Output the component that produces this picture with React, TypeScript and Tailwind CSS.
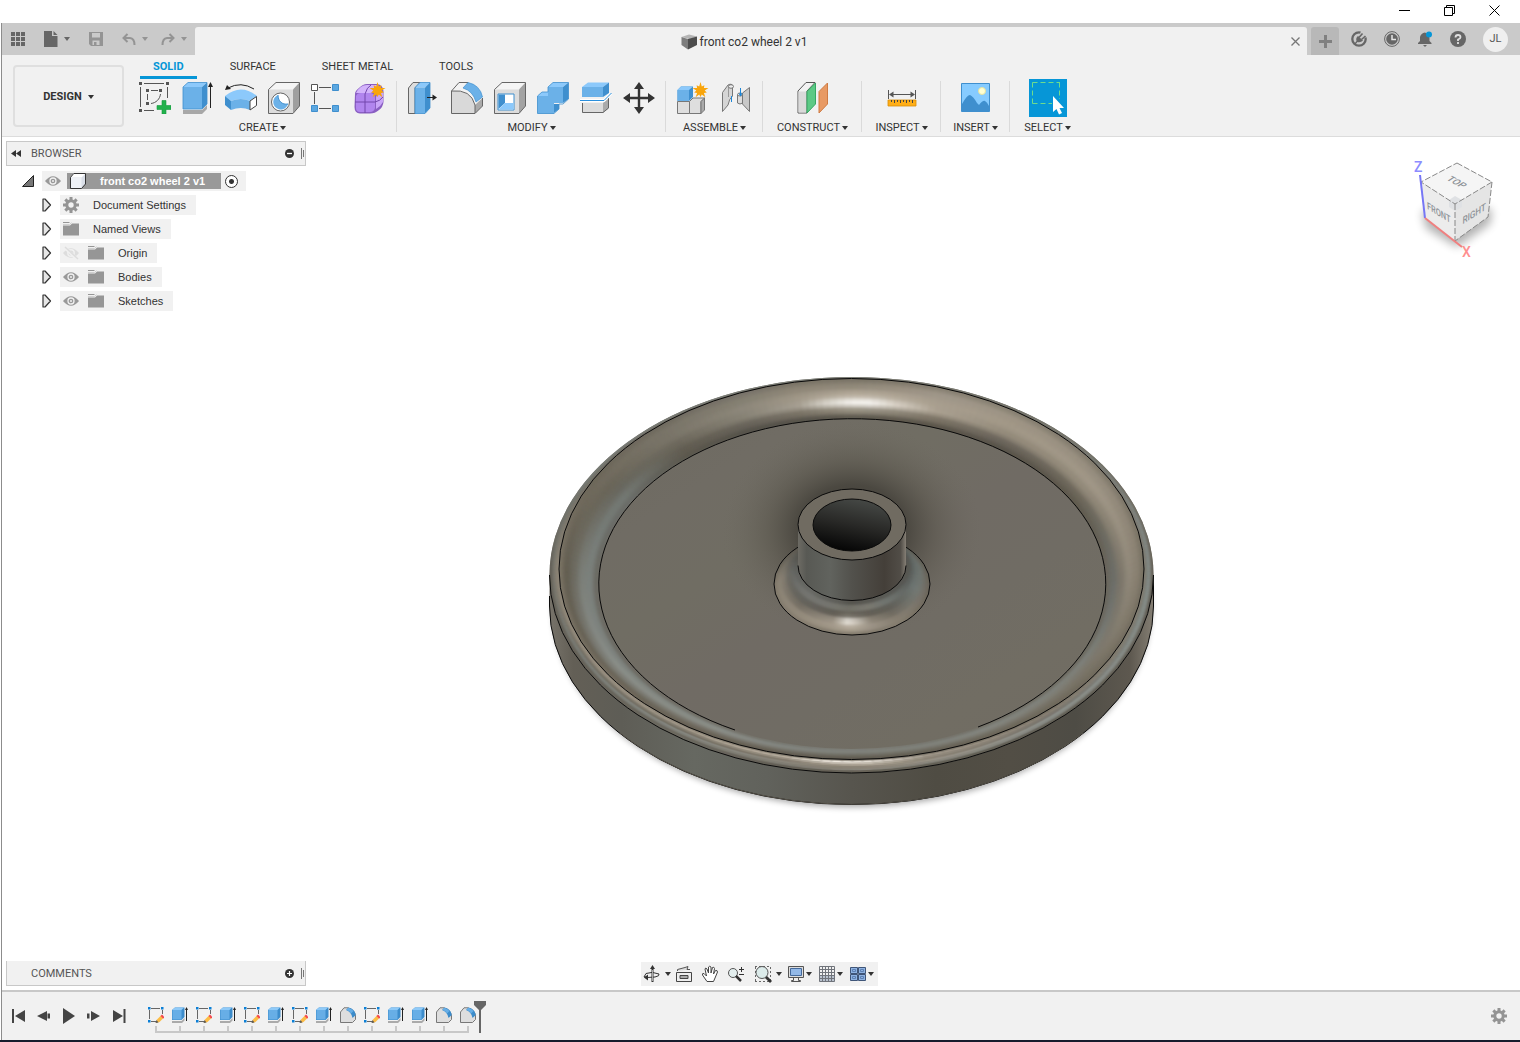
import React from "react";

type P = { children?: React.ReactNode };

const Caret = ({ color = "#333" }: { color?: string }) => (
  <svg width="6" height="4" viewBox="0 0 6 4" className="shrink-0" aria-hidden="true">
    <path d="M0 0H6L3 4Z" fill={color} />
  </svg>
);

const Icon32 = ({ children }: P) => (
  <svg width="32" height="32" viewBox="0 0 32 32" fill="none" className="shrink-0" aria-hidden="true">
    {children}
  </svg>
);

const Star = ({ x, y }: { x: number; y: number }) => {
  const pts: string[] = [];
  for (let i = 0; i < 20; i++) {
    const r = i % 2 ? 4.2 : i % 4 ? 6.6 : 8.4;
    const a = (i * Math.PI) / 10 - Math.PI / 2;
    pts.push(`${(x + r * Math.cos(a)).toFixed(1)},${(y + r * Math.sin(a)).toFixed(1)}`);
  }
  return <polygon points={pts.join(" ")} fill="#f9a50b" />;
};

const L = "#6bb1e8";
const T = "#8cc9fb";
const D = "#3f8fce";

/* ---------- Create ---------- */
const SketchIcon = () => (
  <Icon32>
    <path d="M5 1.500H25M1.500 5V25M28.500 5V16M5 28.500H15M12 8.500H19M8.500 12V18M21.500 12C21 17 17 21 12 21.500" stroke="#555" />
    <path d="M0 0h3v3H0zM27 0h3v3h-3zM0 27h3v3H0zM7 7h3v3H7zM20 7h3v3h-3zM7 20h3v3H7z" fill="#555" />
    <path d="M23 18.500h4v5h5v4h-5v4.500h-4v-4.500h-5v-4h5z" fill="#22b14c" stroke="#159a3e" strokeWidth=".6" />
  </Icon32>
);
const ExtrudeIcon = () => (
  <Icon32>
    <path d="M1 28H20L25 23V27L20 32H1Z" fill="#a8a8a8" />
    <path d="M1 5L6 .5H25L20 5Z" fill={T} />
    <path d="M1 5H20V27H1Z" fill={L} />
    <path d="M20 5L25 .5V22L20 27Z" fill={D} />
    <path d="M1 5L6 .5H25V22L20 27H1Z" stroke="#3f8fce" strokeWidth=".8" />
    <path d="M28.500 3V26" stroke="#222" />
    <path d="M26 5L28.500 0L31 5Z" fill="#222" />
  </Icon32>
);
const RevolveIcon = () => (
  <Icon32>
    <path d="M0 14Q16 1 32 14L25 19Q16 15 6 19Z" fill={T} />
    <path d="M6 19Q16 15 25 19V28Q16 24 6 28Z" fill={L} />
    <path d="M0 14L6 19V28L0 23Z" fill={D} />
    <path d="M25 19L31.500 14.500V23.500L25 28Z" fill="#fff" stroke="#444" />
    <path d="M3 6Q16 -1 29 7" stroke="#222" />
    <path d="M0 8L2 3L6 7Z" fill="#222" />
  </Icon32>
);
const HoleIcon = () => (
  <Icon32>
    <path d="M.5 7.500L8 .5H31.500L25 7.500Z" fill="#f5f5f5" />
    <path d="M.5 7.500H25V31.500H.5Z" fill="#dcdcdc" />
    <path d="M25 7.500L31.500 .5V24L25 31.500Z" fill="#9f9f9f" />
    <path d="M.5 7.500L8 .5H31.500V24L25 31.500H.5Z" stroke="#666" />
    <circle cx="12.500" cy="20" r="9" fill="#fff" stroke="#666" />
    <path d="M10 13A7.500 7.500 0 1 0 20 22C14 23 10 19 10 13Z" fill={L} />
    <path d="M10 13C10 19 14 23 20 22" stroke={D} />
  </Icon32>
);
const PatternIcon = () => (
  <Icon32>
    <path d="M8 5.500H20M3.500 10V22M8 26.500H20" stroke="#555" />
    <path d="M.5 2.500h6v6h-6z" fill="#fff" stroke="#555" />
    <path d="M21.500 2.500h6v6h-6zM.5 23.500h6v6h-6zM21.500 23.500h6v6h-6z" fill="#5ba7e0" stroke="#3f8fce" />
  </Icon32>
);
const FormIcon = () => (
  <Icon32>
    <path d="M1 12Q1 9 5 6Q9 2 13 2H23Q29 3 29.500 9V20Q29 25 25 28Q21 31.500 16 31.500H6Q.5 31 .5 25Z" fill="#8a5fc2" />
    <path d="M2 11Q6 3 13 3H22Q26 3 25 8Q20 11 16 11H6Z" fill="#d3b3fb" />
    <path d="M2 14Q3 11 7 11H17Q21 12 21 16V26Q20 30 16 30H6Q2 30 2 26Z" fill="#b185ee" />
    <path d="M22 15Q23 12 29 10V20Q27 24 22 27Z" fill="#c9a5f8" />
    <path d="M1 20H21Q26 19 29 15M11 31V12Q13 5 17 3" stroke="#7347ac" />
    <Star x={23.5} y={8.5} />
  </Icon32>
);

/* ---------- Modify ---------- */
const PressPullIcon = () => (
  <Icon32>
    <path d="M.5 6L5 .5H12L7 6V31.500H.5Z" fill="#ddd" stroke="#666" />
    <path d="M7 5.500L12 .5H22L17 5.500Z" fill={T} />
    <path d="M7 5.500H17V31.500H7Z" fill={L} />
    <path d="M17 5.500L22 .5V26L17 31.500Z" fill={D} />
    <path d="M7 5.500L12 .5H22V26L17 31.500H7Z" stroke="#3f8fce" strokeWidth=".8" />
    <path d="M19 15.500H26" stroke="#222" />
    <path d="M24.500 12.500L29 15.500L24.500 18.500Z" fill="#222" />
  </Icon32>
);
const FilletIcon = () => (
  <Icon32>
    <path d="M0.500 9L8 .5H17Q30 5 31.500 18V24L24 31.500H.5Z" fill="#f3f3f3" />
    <path d="M.5 9Q20 8 24 23V31.500H.5Z" fill="#d9d9d9" />
    <path d="M24 23L31.500 16V24L24 31.500Z" fill="#aaa" />
    <path d="M.5 9L8 .5H17M31.500 16V24L24 31.500H.5V9Q20 7 24 23V31" stroke="#666" />
    <path d="M12 6L17 .5Q29 3 31.500 15L25 20Q22 9 12 6Z" fill={L} stroke={D} strokeWidth=".7" />
  </Icon32>
);
const ShellIcon = () => (
  <Icon32>
    <path d="M.5 7.500L8 .5H31.500L25 7.500Z" fill="#f5f5f5" />
    <path d="M.5 7.500H25V31.500H.5Z" fill="#dcdcdc" />
    <path d="M25 7.500L31.500 .5V24L25 31.500Z" fill="#a3a3a3" />
    <path d="M.5 7.500L8 .5H31.500V24L25 31.500H.5Z" stroke="#666" />
    <path d="M4 12H20V28H4Z" fill="#fff" stroke={D} />
    <path d="M4.500 12.500H11V21L4.500 27Z" fill={D} />
    <path d="M4.500 27.500L11 21H19.500V27.500Z" fill={T} />
  </Icon32>
);
const CombineIcon = () => (
  <Icon32>
    <path d="M.5 14L5 10H11V5L16 .5H31.500L26 5V11L11 15Z" fill={T} />
    <path d="M.5 14H11V5H26V21H17V31.500H.5Z" fill={L} />
    <path d="M26 5L31.500 .5V17L26 21ZM17 22H22V27L17 31Z" fill={D} />
    <path d="M.5 14L5 10H11V5L16 .5H31.500V17L26 22H22V27L17 31.500H.5Z" stroke={D} strokeWidth=".8" />
  </Icon32>
);
const SplitIcon = () => (
  <Icon32>
    <path d="M2 5L8 .5H29L23 5Z" fill={T} />
    <path d="M2 5H23V15H2Z" fill={L} />
    <path d="M23 5L29 .5V11L23 15Z" fill={D} />
    <path d="M2 21H23V31H2Z" fill="#dcdcdc" />
    <path d="M23 21L29 16V26L23 31Z" fill="#aaa" />
    <path d="M2.500 21V30.500H23L28.500 26V16" stroke="#666" />
    <path d="M0 18.500H24L31 11.500" stroke="#fff" strokeWidth="3" />
    <path d="M0 18.500H24L31.500 11" stroke="#2b8fdc" />
  </Icon32>
);
const MoveIcon = () => (
  <Icon32>
    <path d="M16 4V28M4 16H28" stroke="#333" strokeWidth="2.400" />
    <path d="M16 0L21 7H11ZM16 32L21 25H11ZM0 16L7 11V21ZM32 16L25 11V21Z" fill="#333" />
  </Icon32>
);

/* ---------- Assemble and the rest ---------- */
const ComponentIcon = () => (
  <Icon32>
    <path d="M.5 8L4 4.500H16V15L12 19H.5Z" fill={D} />
    <path d="M.5 8H12V19H.5Z" fill={L} />
    <path d="M.5 8L4 4.500H16L12 8Z" fill={T} />
    <path d="M.5 19.500H12.500V31.500H.5Z" fill="#dedede" stroke="#777" />
    <path d="M12.500 19.500L16 16H28L24 19.500V31.500H12.500Z" fill="#dedede" stroke="#777" />
    <path d="M24 19.500L27.500 16V28L24 31.500Z" fill="#aaa" stroke="#777" />
    <Star x={23.5} y={8.5} />
  </Icon32>
);
const JointIcon = () => (
  <Icon32>
    <path d="M2.500 10.500L8 3Q12 1 12.500 4V14Q9 17 8 23L2.500 29.500Z" fill="#d5d5d5" stroke="#777" />
    <path d="M8.500 5V15" stroke="#999" />
    <ellipse cx="11" cy="4.500" rx="2.500" ry="1.800" fill="#eee" stroke="#777" />
    <path d="M29.500 5.500L22.500 11V22L29.500 29.500Z" fill="#c8c8c8" stroke="#777" />
    <path d="M17.500 13V21Q20 23 22.500 21V13Z" fill="#ddd" stroke="#777" />
    <ellipse cx="20" cy="12.500" rx="2.500" ry="1.500" fill="#eee" stroke="#777" />
    <path d="M11.500 14V20M20.500 6V14" stroke="#1c86d8" />
    <path d="M18.500 11.500L20.500 14.500L22.500 11.500Z" fill="#1c86d8" />
  </Icon32>
);
const ConstructIcon = () => (
  <Icon32>
    <path d="M1 9L9 .5H18L10 9V31H1Z" fill="#f2f2f2" stroke="#555" />
    <path d="M1.500 9.500H9V30.500H1.500Z" fill="#dadada" />
    <path d="M10 9.500L18.500 1V22L10 31Z" fill="#5cc985" stroke="#35a862" />
    <path d="M22 9.500L30.500 1V22L22 31Z" fill="#e89a64" stroke="#cf7b43" />
  </Icon32>
);
const InspectIcon = () => (
  <Icon32>
    <path d="M2.500 8V17M29.500 8V17M5 12.500H27" stroke="#555" />
    <path d="M3 12.500L7.500 9.500V15.500ZM29 12.500L24.500 9.500V15.500Z" fill="#555" />
    <path d="M2 18H30V24H2Z" fill="#ffae17" stroke="#d98e05" strokeWidth=".8" />
    <path d="M5.500 18V20M8.500 18V21M11.500 18V20M14.500 18V21M17.500 18V20M20.500 18V21M23.500 18V20M26.500 18V21" stroke="#444" />
  </Icon32>
);
const InsertIcon = () => (
  <Icon32>
    <path d="M1.500 1.500H29.500V29.500H1.500Z" fill="#86cbff" />
    <path d="M2 22Q7 13 10 13Q13 14 17 21L19 23Q23 18 25 19Q27 20 29 24V29.500H2Z" fill="#3f8fce" />
    <path d="M1.500 1.500H29.500V29.500H1.500Z" stroke="#3f8fce" />
    <circle cx="22" cy="9" r="3.500" fill="#ffffd2" stroke="#e6e3a0" />
  </Icon32>
);
const SelectIcon = () => (
  <svg width="38" height="38" viewBox="0 0 38 38" aria-hidden="true">
    <path d="M0 0H38V38H0Z" fill="#0696d7" />
    <path d="M3.500 3.500H31M30.500 3.500V20M3.500 3.500V24.500M3.500 24.500H23" stroke="#6fdc8c" strokeDasharray="5 3" fill="none" />
    <path d="M24 17V33L27.500 30L30 35.500L33 34L30.500 29H35Z" fill="#fff" />
  </svg>
);

type Group = { label: string; width: string; icons: [string, React.ReactNode][] };
const groups: Group[] = [
  {
    label: "CREATE",
    width: "w-[269px]",
    icons: [
      ["Create Sketch", <SketchIcon />],
      ["Extrude", <ExtrudeIcon />],
      ["Revolve", <RevolveIcon />],
      ["Hole", <HoleIcon />],
      ["Rectangular Pattern", <PatternIcon />],
      ["Create Form", <FormIcon />],
    ],
  },
  {
    label: "MODIFY",
    width: "w-[269px]",
    icons: [
      ["Press Pull", <PressPullIcon />],
      ["Fillet", <FilletIcon />],
      ["Shell", <ShellIcon />],
      ["Combine", <CombineIcon />],
      ["Split Body", <SplitIcon />],
      ["Move", <MoveIcon />],
    ],
  },
  { label: "ASSEMBLE", width: "w-[97px]", icons: [["New Component", <ComponentIcon />], ["Joint", <JointIcon />]] },
  { label: "CONSTRUCT", width: "w-[99px]", icons: [["Offset Plane", <ConstructIcon />]] },
  { label: "INSPECT", width: "w-[79px]", icons: [["Measure", <InspectIcon />]] },
  { label: "INSERT", width: "w-[69px]", icons: [["Insert Decal", <InsertIcon />]] },
  { label: "SELECT", width: "w-[75px]", icons: [["Select", <SelectIcon />]] },
];

/* ---------- Small icons ---------- */
const gearTeeth = [0, 45, 90, 135, 180, 225, 270, 315];
const Gear = () => (
  <svg width="16" height="16" viewBox="0 0 16 16" className="shrink-0" aria-hidden="true">
    <circle cx="8" cy="8" r="4.200" fill="none" stroke="#949494" strokeWidth="3" />
    {gearTeeth.map((a) => (
      <rect key={a} x="6.500" y="0" width="3" height="3.500" fill="#949494" transform={`rotate(${a} 8 8)`} />
    ))}
  </svg>
);
const Eye = () => (
  <svg width="16" height="16" viewBox="0 0 16 16" className="shrink-0" aria-hidden="true">
    <path d="M0 8Q8 -1.500 16 8Q8 17.500 0 8Z" fill="#999" />
    <circle cx="8" cy="8" r="3" fill="#999" stroke="#f1f1f1" strokeWidth="1.300" />
    <circle cx="8" cy="8" r="1" fill="#f1f1f1" />
  </svg>
);
const EyeOff = () => (
  <svg width="16" height="16" viewBox="0 0 16 16" className="shrink-0" aria-hidden="true">
    <path d="M0 8Q8 -1.500 16 8Q8 17.500 0 8Z" fill="#ddd" />
    <circle cx="8" cy="8" r="3.200" fill="#ddd" stroke="#f1f1f1" strokeWidth="1.400" />
    <path d="M1 2L14 14" stroke="#f1f1f1" strokeWidth="3" />
    <path d="M2 2L15 14" stroke="#ddd" strokeWidth="1.500" />
  </svg>
);
const Folder = () => (
  <svg width="16" height="14" viewBox="0 0 16 14" className="shrink-0" aria-hidden="true">
    <path d="M0 3.500H7L9 1.500H16V13.500H0Z" fill="#969696" />
    <path d="M0 .5H6.500" stroke="#969696" />
    <path d="M0 2.500H6.500L8.500 .5" stroke="#d0d0d0" fill="none" />
  </svg>
);
const Disclosure = () => (
  <svg width="10" height="14" viewBox="0 0 10 14" aria-hidden="true">
    <path d="M1 1H3L8.500 7L3 13H1Z" fill="#e6e6e6" stroke="#333" strokeWidth="1.200" strokeLinejoin="round" />
  </svg>
);

const Grip = () => (
  <svg width="3" height="11" viewBox="0 0 3 11" aria-hidden="true">
    <path d="M.5 0V11M2.500 2V9" stroke="#777" />
  </svg>
);

const TreeItem = ({ label, icons }: { label: string; icons: React.ReactNode }) => (
  <li className="flex h-5 items-center">
    <button aria-label={`Expand ${label}`} className="mr-2 w-[10px]">
      <Disclosure />
    </button>
    <div className="flex h-5 items-center gap-3.5 bg-[#f1f1f1] pr-2.5 pl-[3px]">
      <span className="flex items-center gap-[9px]">{icons}</span>
      <span>{label}</span>
    </div>
  </li>
);

/* ---------- Model ---------- */
type Ell = { cx: number; cy: number; rx: number; ry: number };
type Key = [number, string[]];
const rgb = (h: string) => [1, 3, 5].map((i) => parseInt(h.slice(i, i + 2), 16));
const mix = (a: number[], b: number[], t: number) => a.map((v, i) => v + (b[i] - v) * t);

const sample = (keys: Key[], ang: number, t: number) => {
  const n = keys.length;
  let i = n - 1;
  for (let k = 0; k < n; k++) if (keys[k][0] <= ang) i = k;
  const a0 = keys[i][0];
  const a1 = i === n - 1 ? keys[0][0] + 360 : keys[i + 1][0];
  const f = (ang - a0) / (a1 - a0);
  const at = (c: string[]) => {
    const p = t * (c.length - 1);
    const j = Math.min(Math.floor(p), c.length - 2);
    const q = p - j;
    return mix(rgb(c[j]), rgb(c[j + 1]), q * q * (3 - 2 * q));
  };
  return mix(at(keys[i][1]), at(keys[(i + 1) % n][1]), f).map(Math.round);
};

const Ring = ({ a, b, keys, rows, steps }: { a: Ell; b: Ell; keys: Key[]; rows: number; steps: number }) => {
  const pt = (deg: number, t: number) => {
    const r = (deg * Math.PI) / 180;
    const m = (u: number, v: number) => u + (v - u) * t;
    return `${(m(a.cx, b.cx) + m(a.rx, b.rx) * Math.sin(r)).toFixed(1)} ${(m(a.cy, b.cy) - m(a.ry, b.ry) * Math.cos(r)).toFixed(1)}`;
  };
  const out: React.ReactNode[] = [];
  for (let i = 0; i < steps; i++)
    for (let j = 0; j < rows; j++) {
      const d0 = (i * 360) / steps;
      const d1 = ((i + 1) * 360) / steps;
      const t0 = j / rows;
      const t1 = (j + 1) / rows;
      const c = `rgb(${sample(keys, (d0 + d1) / 2, (t0 + t1) / 2).join(",")})`;
      out.push(
        <path
          key={`${i}-${j}`}
          d={`M${pt(d0, t0)}L${pt(d1, t0)}L${pt(d1, t1)}L${pt(d0, t1)}Z`}
          fill={c}
          stroke={c}
          strokeWidth={j === 0 || j === rows - 1 ? 2 : 0.6}
        />
      );
    }
  return <g>{out}</g>;
};

const outer: Ell = { cx: 851.5, cy: 575, rx: 302, ry: 198 };
const lip: Ell = { cx: 851.5, cy: 569, rx: 292.5, ry: 190.5 };
const floor: Ell = { cx: 851.5, cy: 584, rx: 253.5, ry: 165 };
const foot: Ell = { cx: 852, cy: 584, rx: 78, ry: 51 };
const neck: Ell = { cx: 852, cy: 565.5, rx: 54, ry: 35 };

const bowlKeys: Key[] = [
  [0, ["#777164", "#908879", "#b5ab9b", "#f6f4ef", "#948d7e", "#5c584e"]],
  [4, ["#777164", "#948c7d", "#b6ac9c", "#f8f6f2", "#918a7c", "#5b574d"]],
  [9, ["#7b7568", "#998f80", "#b1a797", "#dcd5ca", "#8b8475", "#5a554b"]],
  [18, ["#847d6f", "#a0978a", "#a89e8e", "#aca292", "#7a7264", "#59544a"]],
  [35, ["#857e70", "#9f9585", "#a39988", "#938a7a", "#69635a", "#58534a"]],
  [60, ["#7f786a", "#978e7f", "#a29888", "#928979", "#6c6659", "#5f5a4e"]],
  [90, ["#756f61", "#8a8172", "#91897a", "#7c766a", "#6b6d68", "#6b665c"]],
  [120, ["#6f695c", "#777163", "#7b7568", "#7d7a70", "#7f827c", "#6b675d"]],
  [150, ["#6b6558", "#6e695c", "#77746a", "#85867f", "#82857f", "#706c62"]],
  [180, ["#59544a", "#615c52", "#6d6a60", "#787870", "#858984", "#7b7c76"]],
  [210, ["#625c50", "#6c665a", "#777369", "#8b8e88", "#8a8e89", "#6f6c63"]],
  [240, ["#776f62", "#6a6457", "#7e7f78", "#8c908b", "#7e837e", "#6b6860"]],
  [270, ["#7d7667", "#625d50", "#6d6b61", "#7c807a", "#7c827e", "#6a6860"]],
  [300, ["#6c6659", "#716b5e", "#6a6558", "#68675e", "#737873", "#6a6c68"]],
  [320, ["#6f6a5f", "#7a7569", "#7a7569", "#6c675b", "#605b50", "#5b584e"]],
  [338, ["#77716a", "#858072", "#8f897c", "#8a8578", "#68635a", "#55514a"]],
  [349, ["#777164", "#8f8778", "#a19888", "#a8a194", "#787164", "#55514a"]],
  [355, ["#777164", "#8f8778", "#ada393", "#dbd7ce", "#888172", "#58544b"]],
];
const lipKeys: Key[] = [
  [0, ["#6b675c", "#6b675c", "#6b675c", "#77756c", "#7f8079", "#7f8079"]],
  [70, ["#77736a", "#7f7d75", "#7c817d", "#848a86", "#77756c", "#6b675c"]],
  [100, ["#857f72", "#7d7a70", "#7f8783", "#8a928e", "#706d64", "#5b574e"]],
  [140, ["#6e685c", "#8b8376", "#77726a", "#8f938e", "#7c7c75", "#5c584e"]],
  [165, ["#6f695d", "#a0978a", "#8a8274", "#989287", "#7b7970", "#5c584e"]],
  [177, ["#6f695d", "#e3ddd3", "#b0a798", "#8a8274", "#8c897f", "#5c584e"]],
  [184, ["#6f695d", "#efe9e0", "#a39a8b", "#8a8274", "#858177", "#5c584e"]],
  [193, ["#756f62", "#b8ae9f", "#827a6d", "#8a867b", "#75726a", "#5c584e"]],
  [215, ["#857d70", "#a39a8b", "#716b5f", "#898b85", "#6a665c", "#6d6a61"]],
  [245, ["#918878", "#978e80", "#6f6a5f", "#7e837e", "#625e54", "#67635a"]],
  [270, ["#8b8375", "#8c8476", "#857e71", "#77766d", "#6c6960", "#5f5b52"]],
  [300, ["#77736a", "#77736a", "#6e6b62", "#767870", "#7b7f7a", "#777a75"]],
];
const footKeys: Key[] = [
  [0, ["#4d4a43", "#4d4a43", "#4d4a43", "#4d4a43", "#4d4a43", "#4d4a43"]],
  [75, ["#625e54", "#6a6960", "#6d736f", "#666d6a", "#585b58", "#55544f"]],
  [110, ["#6d675a", "#77726a", "#747974", "#6e7673", "#5d615e", "#55544f"]],
  [145, ["#857d6f", "#8a8274", "#6f6a60", "#5f5d56", "#747975", "#555550"]],
  [165, ["#7d7668", "#a0978a", "#8f8779", "#5d5951", "#807f77", "#53524c"]],
  [178, ["#7d7668", "#b0a696", "#d6d0c6", "#635f56", "#7a7971", "#504f4a"]],
  [184, ["#7d7668", "#b0a696", "#ece8e0", "#69655b", "#74736b", "#504f4a"]],
  [196, ["#7d7668", "#a69c8c", "#9d9486", "#5c5850", "#7b7b74", "#5a5a55"]],
  [230, ["#847c6e", "#958c7d", "#746e63", "#62615b", "#787975", "#666763"]],
  [270, ["#7d7668", "#8c8476", "#857e72", "#6d6b64", "#656763", "#5f605c"]],
  [300, ["#5f5b52", "#6a655b", "#66635a", "#5c5a54", "#555550", "#4d4a43"]],
];

const Wheel = () => (
  <svg
    viewBox="540 370 624 450"
    className="absolute top-[233px] left-[calc(50%-221px)] h-[450px] w-[624px]"
    role="img"
    aria-label="front co2 wheel 2 v1 model"
  >
    <defs>
      <linearGradient id="wall" gradientUnits="userSpaceOnUse" x1="549" y1="0" x2="1154" y2="0">
        <stop offset="0" stopColor="#77736a" />
        <stop offset=".04" stopColor="#635f56" />
        <stop offset=".12" stopColor="#5e5d56" />
        <stop offset=".24" stopColor="#666861" />
        <stop offset=".36" stopColor="#61625c" />
        <stop offset=".5" stopColor="#57554e" />
        <stop offset=".64" stopColor="#4f4c43" />
        <stop offset=".76" stopColor="#524e45" />
        <stop offset=".87" stopColor="#4e4c45" />
        <stop offset=".96" stopColor="#5d584f" />
        <stop offset="1" stopColor="#857f74" />
      </linearGradient>
      <linearGradient id="flat" x1="0" y1="0" x2="1" y2="1">
        <stop offset="0" stopColor="#6d6a60" />
        <stop offset=".2" stopColor="#706c64" />
        <stop offset=".35" stopColor="#706d63" />
        <stop offset=".5" stopColor="#706b64" />
        <stop offset=".65" stopColor="#706c64" />
        <stop offset=".8" stopColor="#716d63" />
        <stop offset="1" stopColor="#706b63" />
      </linearGradient>
      <radialGradient id="shade" gradientUnits="userSpaceOnUse" cx="852" cy="530" r="130" gradientTransform="translate(0 90) scale(1 .83)">
        <stop offset="0" stopColor="#37342e" />
        <stop offset=".42" stopColor="#45423b" stopOpacity=".85" />
        <stop offset=".65" stopColor="#57534a" stopOpacity=".5" />
        <stop offset="1" stopColor="#6d6960" stopOpacity="0" />
      </radialGradient>
      <linearGradient id="boss" x1="0" y1="0" x2="1" y2="0">
        <stop offset="0" stopColor="#6d6b64" />
        <stop offset=".08" stopColor="#585954" />
        <stop offset=".3" stopColor="#61635e" />
        <stop offset=".5" stopColor="#52514c" />
        <stop offset=".8" stopColor="#443f39" />
        <stop offset=".95" stopColor="#514d47" />
        <stop offset="1" stopColor="#857f75" />
      </linearGradient>
      <linearGradient id="bore" x1=".7" y1="0" x2=".4" y2="1">
        <stop offset="0" stopColor="#474a47" />
        <stop offset=".5" stopColor="#292927" />
        <stop offset="1" stopColor="#050505" />
      </linearGradient>
      <filter id="soft" x="-5%" y="-5%" width="110%" height="110%">
        <feGaussianBlur stdDeviation="1.6 1.1" />
      </filter>
      <filter id="fine" x="-5%" y="-5%" width="110%" height="110%">
        <feGaussianBlur stdDeviation="1 .5" />
      </filter>
      <filter id="cast" x="-10%" y="-10%" width="120%" height="120%">
        <feGaussianBlur stdDeviation="3" />
      </filter>
      <clipPath id="cOuter"><ellipse {...outer} /></clipPath>
      <clipPath id="cLip"><ellipse {...lip} /></clipPath>
      <clipPath id="cFoot"><ellipse {...foot} /></clipPath>
    </defs>
    <ellipse cx="852" cy="609" rx="299" ry="198" fill="#000" opacity=".35" filter="url(#cast)" />
    <path d="M549.500 575V606A302 198.500 0 0 0 1153.500 606V575Z" fill="url(#wall)" />
    <path d="M549.500 596V606A302 198.500 0 0 0 1153.500 606V575" fill="none" stroke="#0a0a0a" />
    <path d="M620 733A302 199 0 0 0 1083 733" fill="none" stroke="#57534a" />
    <ellipse {...outer} fill="#77756c" />
    <g clipPath="url(#cOuter)">
      <g filter="url(#fine)">
        <Ring a={lip} b={outer} keys={lipKeys} rows={8} steps={180} />
      </g>
    </g>
    <path d="M549.500 575A302 198 0 0 0 1153.500 575" fill="none" stroke="#0a0a0a" />
    <g clipPath="url(#cLip)">
      <g filter="url(#soft)">
        <Ring a={lip} b={floor} keys={bowlKeys} rows={14} steps={240} />
      </g>
    </g>
    <ellipse {...lip} fill="none" stroke="#0a0a0a" />
    <ellipse {...floor} fill="url(#flat)" />
    <ellipse {...floor} fill="url(#shade)" />
    <path d="M735 730A253.500 165 0 1 1 978 727" fill="none" stroke="#0a0a0a" />
    <g clipPath="url(#cFoot)">
      <g filter="url(#soft)">
        <Ring a={foot} b={neck} keys={footKeys} rows={10} steps={120} />
      </g>
    </g>
    <ellipse {...foot} fill="none" stroke="#0a0a0a" />
    <path d="M798 524.500V565.500A54 35 0 0 0 906 565.500V524.500Z" fill="url(#boss)" />
    <path d="M798 565.500A54 35 0 0 0 906 565.500" fill="none" stroke="#0a0a0a" />
    <ellipse cx="852" cy="524.500" rx="54" ry="35.500" fill="#706b61" stroke="#0a0a0a" />
    <ellipse cx="852" cy="525" rx="39" ry="26" fill="url(#bore)" stroke="#0a0a0a" />
  </svg>
);

const ViewCube = () => (
  <svg width="120" height="120" viewBox="0 0 120 120" className="mt-[13px]" role="img" aria-label="View cube">
    <defs>
      <filter id="cubeShadow" x="-30%" y="-30%" width="160%" height="160%">
        <feGaussianBlur stdDeviation="5" />
      </filter>
    </defs>
    <path d="M22 62L55 50L92 60L90 74L57 97L26 78Z" fill="#000" opacity=".3" filter="url(#cubeShadow)" />
    <path d="M57 13L92 32L55 54L21 32Z" fill="#f5f5f5" />
    <path d="M21 32L55 54V91L25 68Z" fill="#ececec" />
    <path d="M55 54L92 32L88 67L55 91Z" fill="#e5e5e5" />
    <path d="M49 50L55 46L62 50V57L55 61L49 57Z" fill="#dfe1e4" />
    <path d="M57 13L92 32L55 54L21 32ZM55 54V91M92 32L88 67L55 91" fill="none" stroke="#888" strokeDasharray="6 2" />
    <path d="M20 25L25 68" stroke="#7676f5" strokeWidth="2" />
    <path d="M25 68L62 97" stroke="#f08080" strokeWidth="2" />
    <g fill="#8d9297" fontFamily="Roboto, sans-serif" fontSize="11" fontWeight="500" textAnchor="middle">
      <text transform="matrix(.78 .42 -.75 .5 54 34)">TOP</text>
      <text transform="matrix(.74 .46 .06 1 39 66)" fontSize="10">FRONT</text>
      <text transform="matrix(.8 -.5 -.03 1 74 67)" fontSize="10">RIGHT</text>
    </g>
    <g fontFamily="Roboto, sans-serif" fontSize="14" fontWeight="500">
      <text x="14" y="22" fill="#8c8cff">Z</text>
      <text x="62" y="107" fill="#ff8f8f">X</text>
    </g>
  </svg>
);

/* ---------- Navigation bar ---------- */
const Nav = ({ label, children, caret, layout }: { label: string; children: React.ReactNode; caret?: boolean; layout: string }) => (
  <button aria-label={label} className={`flex h-6 shrink-0 items-center ${layout}`}>
    <svg width="18" height="18" viewBox="0 0 18 18" fill="none" className="shrink-0" aria-hidden="true">
      {children}
    </svg>
    {caret && <Caret />}
  </button>
);

const NavBar = () => (
  <div className="flex h-6 bg-[#f1f1f1] pl-0.5">
    <Nav label="Orbit" caret layout="w-8 gap-1">
      <path d="M9.500 17V3M3 12H1L3 8.500Q9 6 16 9Q17 11 12 12L4 12.500" stroke="#333" />
      <path d="M7 4L9.500 0L12 4ZM1 12.500L5 9.500V15.500ZM8.500 4H10.500V17H8.500Z" fill="#333" />
      <path d="M9.500 5V16" stroke="#ddd" strokeWidth=".7" />
    </Nav>
    <Nav label="Look At" layout="w-[26px]">
      <path d="M1.500 7.500H16.500V16.500H1.500Z" fill="#eee" stroke="#444" />
      <path d="M5 10.500H13V13.500H5Z" fill="#aaa" stroke="#444" />
      <path d="M2.500 6V4.500L10 2.500L13 1.500L12 4.500H15" fill="#ddd" stroke="#555" />
    </Nav>
    <Nav label="Pan" layout="w-[26px]">
      <path d="M6 16.500L1.500 10Q1 8 3 8.500L5.500 11L4 4Q4.500 2 6 4L7.500 8L7.500 2Q8.500 .5 10 2V8L11.500 2.500Q13 1.500 13.500 3.500L12.500 9L14.500 5.500Q16.500 5 16.500 7L14 13L12.500 16.500H7Z" fill="#fff" stroke="#444" />
    </Nav>
    <Nav label="Zoom" layout="w-[26px]">
      <circle cx="6" cy="8" r="4.500" fill="#e3eeee" stroke="#555" />
      <path d="M9 11L14 16" stroke="#333" strokeWidth="2.500" />
      <path d="M12 4.500H17M14.500 2V7M12 9.500H17" stroke="#333" />
    </Nav>
    <Nav label="Fit" caret layout="w-[34px] gap-1 pl-px">
      <path d="M1 1.500H17M1 16.500H17M1.500 2V17M16.500 2V17" stroke="#666" strokeDasharray="2 2" />
      <circle cx="8" cy="7.500" r="6" fill="#dcebea" stroke="#555" />
      <path d="M12 12L17 17" stroke="#333" strokeWidth="2.800" />
    </Nav>
    <Nav label="Display Settings" caret layout="w-[31px] gap-px">
      <path d="M1.500 1.500H16.500V12.500H1.500Z" fill="#ddd" stroke="#555" />
      <path d="M3.500 3.500H14.500V10.500H3.500Z" fill="#93b9e8" stroke="#456a9c" />
      <path d="M6.500 13V15.500H4.500V16.500H13.500V15.500H11.500V13" fill="#eee" stroke="#555" />
    </Nav>
    <Nav label="Grid and Snaps" caret layout="w-[31px] gap-px">
      <path d="M1.500 11H16.500V17H1.500Z" fill="#b9c2cf" />
      <path d="M1.500 1.500H16.500V16.500H1.500ZM4.500 1V17M7.500 1V17M10.500 1V17M13.500 1V17M1 4.500H17M1 7.500H17M1 10.500H17M1 13.500H17" stroke="#70747b" />
    </Nav>
    <Nav label="Viewports" caret layout="w-[29px] gap-px">
      <path d="M1.500 2.500H8.500V8.500H1.500ZM9.500 2.500H16.500V8.500H9.500ZM1.500 9.500H8.500V15.500H1.500ZM9.500 9.500H16.500V15.500H9.500Z" fill="#8fb3e3" stroke="#3f5578" />
      <path d="M3.500 4.500H6.500V6.500H3.500ZM11.500 4.500H14.500V6.500H11.500ZM3.500 11.500H6.500V13.500H3.500ZM11.500 11.500H14.500V13.500H11.500Z" stroke="#5d80b3" />
    </Nav>
  </div>
);

/* ---------- Timeline ---------- */
const Feature = ({ kind }: { kind: string }) => (
  <svg width="16" height="16" viewBox="0 0 16 16" fill="none" aria-hidden="true">
    {kind === "S" && (
      <>
        <path d="M3 1.500H12M1.500 3V12M14.500 3V7M3 14.500H8" stroke="#666" />
        <path d="M0 0h2.500v2.500H0zM13 0h2.500v2.500H13zM0 13h2.500v2.500H0z" fill="#0a7fd6" />
        <path d="M8 16L9 12.500L13 8.500L15.500 11L11.500 15Z" fill="#fcbc45" />
        <path d="M7.500 16L8.500 13L10.500 15.500Z" fill="#555" />
        <path d="M12.500 9L14 7.500L16 9.500V11L15 11.500Z" fill="#f5464e" />
      </>
    )}
    {kind === "E" && (
      <>
        <path d="M0 14H9.500L12.500 11V13.500L10 16H0Z" fill="#aaa" />
        <path d="M0 3L3 .5H12.500V10L9.500 13H0Z" fill="#3c8ccb" />
        <path d="M0 3L3 .5H12L9.500 3Z" fill="#8fcaf8" />
        <path d="M.5 3H9.500V12.500H.5Z" fill="#67aee6" />
        <path d="M14.500 2V14" stroke="#222" />
        <path d="M13 3L14.500 0L16 3Z" fill="#222" />
      </>
    )}
    {kind === "F" && (
      <>
        <path d="M.5 5L4 .8H8Q15 3 15.500 9V12.500L12.500 15.500H.5Z" fill="#dedede" stroke="#777" />
        <path d="M6 3L8.500 .5Q15 2 15.800 8L12.500 11Q11.500 5 6 3Z" fill="#3c8ccb" />
        <path d="M6.500 2.700L8.500 .8Q12 2 13.500 4L11 6.500Q9.500 4 6.500 2.700Z" fill="#67aee6" />
      </>
    )}
  </svg>
);

const features = "SESESESEFSEEFF".split("");

const playback: [string, string][] = [
  ["Go to start", "M0 1H2V15H0ZM13 2V14L3 8Z"],
  ["Step back", "M10 3V13L0 8ZM10.500 5.500H13V10.500H10.500Z"],
  ["Play", "M1 0V16L13 8Z"],
  ["Step forward", "M4 3V13L13 8ZM0 5.500H2.500V10.500H0Z"],
  ["Go to end", "M1 2V14L11 8ZM11.500 1H13.500V15H11.500Z"],
];

const tabs = ["SOLID", "SURFACE", "SHEET METAL", "TOOLS"];

export default function App() {
  return (
    <div className="flex min-h-screen flex-col bg-white font-['Liberation_Sans',Arial,sans-serif] text-[11px] leading-4 text-[#333]">
      {/* Window controls */}
      <div className="flex h-[23px] justify-end pr-[3px]">
        {[
          ["Minimize", "M0 5.500H11"],
          ["Restore", "M.5 2.500H8.500V10.500H.5ZM2.500 2V.5H10.500V8.500H9"],
          ["Close", "M.5 .5L10.500 10.500M10.500 .5L.5 10.500"],
        ].map(([label, d]) => (
          <button key={label} aria-label={label} className="flex h-5 w-[45px] items-center justify-center">
            <svg width="11" height="11" viewBox="0 0 11 11" fill="none" stroke="#000" aria-hidden="true">
              <path d={d} />
            </svg>
          </button>
        ))}
      </div>

      <div className="ml-px flex flex-1 flex-col border-l border-[#8c8c8c]">
        {/* Quick access and document tab */}
        <header className="flex h-8 bg-[#cacaca]">
          <div className="flex w-[193px] shrink-0 items-center pl-[9px]">
            <button aria-label="Data panel" className="mr-[18px]">
              <svg width="15" height="15" viewBox="0 0 15 15" fill="#666" aria-hidden="true">
                <path d="M0 0h4v4H0zM5 0h4v4H5zM10 0h4v4h-4zM0 5h4v4H0zM5 5h4v4H5zM10 5h4v4h-4zM0 10h4v4H0zM5 10h4v4H5zM10 10h4v4h-4z" />
              </svg>
            </button>
            <button aria-label="File" className="mr-[19px] flex items-center gap-1.5">
              <svg width="14" height="16" viewBox="0 0 14 16" fill="#666" aria-hidden="true">
                <path d="M0 0H8V5H13.500V16H0ZM9.500 0L13.500 4H9.500Z" />
              </svg>
              <Caret color="#666" />
            </button>
            <button aria-label="Save" className="mr-[19px]">
              <svg width="14" height="14" viewBox="0 0 14 14" fill="#949494" aria-hidden="true">
                <path fillRule="evenodd" d="M0 0H14V14H2L0 12ZM3 1V5.500H11V1ZM3.500 8.500V13H10.500V8.500ZM5 10H7.500V13H5Z" />
              </svg>
            </button>
            <button aria-label="Undo" className="mr-[13px] flex items-center gap-1.5">
              <svg width="14" height="13" viewBox="0 0 14 13" fill="none" stroke="#949494" strokeWidth="2" aria-hidden="true">
                <path d="M5.500 1L1.500 5L5.500 9M2 5H8Q12.500 5.500 12.500 12" />
              </svg>
              <Caret color="#949494" />
            </button>
            <button aria-label="Redo" className="flex items-center gap-1.5">
              <svg width="14" height="13" viewBox="0 0 14 13" fill="none" stroke="#949494" strokeWidth="2" aria-hidden="true">
                <path d="M8.500 1L12.500 5L8.500 9M12 5H6Q1.500 5.500 1.500 12" />
              </svg>
              <Caret color="#949494" />
            </button>
          </div>
          <div className="mt-1 flex h-7 flex-1 items-center rounded-t-[3px] bg-[#f1f1f1] pr-[7px]">
            <h1 className="flex flex-1 items-center justify-center gap-0.5 pt-px pl-0.5 font-[Roboto,sans-serif] text-[12px]">
              <svg width="17" height="16" viewBox="0 0 17 16" aria-hidden="true">
                <path d="M.5 3L8 .5L16 2.500L8.500 5Z" fill="#b5b5b5" />
                <path d="M.5 3L7 5V15.500L.5 11Z" fill="#7d7d7d" />
                <path d="M7 5L16 2.500V11L7 15.500Z" fill="#4d4d4d" />
              </svg>
              front co2 wheel 2 v1
            </h1>
            <button aria-label="Close tab">
              <svg width="9" height="9" viewBox="0 0 9 9" stroke="#777" strokeWidth="1.300" aria-hidden="true">
                <path d="M.5 .5L8.500 8.500M8.500 .5L.5 8.500" />
              </svg>
            </button>
          </div>
          <div className="flex w-[213px] shrink-0 items-center pl-1">
            <button aria-label="New tab" className="mt-1 flex h-7 w-7 items-center justify-center rounded-t-[3px] bg-[#b8b8b8]">
              <svg width="13" height="13" viewBox="0 0 13 13" stroke="#808080" strokeWidth="3" aria-hidden="true">
                <path d="M6.500 0V13M0 6.500H13" />
              </svg>
            </button>
            <button aria-label="Extensions" className="ml-3">
              <svg width="16" height="16" viewBox="0 0 16 16" aria-hidden="true">
                <circle cx="8" cy="8" r="6.700" fill="none" stroke="#666" strokeWidth="2.300" />
                <path d="M3 13L5.500 10Q4.500 7 7 5L12 9.500Q9.500 12 6.500 11L4 14Z" fill="#666" />
                <path d="M10 0H16V6L13 7L9 3Z" fill="#cacaca" />
                <path d="M8 6.500L11.500 2.500M10.500 8.500L14.500 5" stroke="#666" strokeWidth="1.600" />
              </svg>
            </button>
            <button aria-label="Job status" className="ml-[17px]">
              <svg width="16" height="16" viewBox="0 0 16 16" aria-hidden="true">
                <circle cx="8" cy="8" r="7.400" fill="none" stroke="#666" />
                <circle cx="8" cy="8" r="5.800" fill="#666" />
                <path d="M8 4V8.500H12" fill="none" stroke="#e6e6e6" strokeWidth="1.500" />
              </svg>
            </button>
            <button aria-label="Notifications" className="ml-[17px]">
              <svg width="16" height="16" viewBox="0 0 16 16" aria-hidden="true">
                <path d="M1 13V12L3 10V6Q4 2 8 1.500Q12 3 12.500 7V10L14.500 12V13ZM6 14H10L8 16Z" fill="#666" />
                <circle cx="12" cy="3.500" r="3" fill="#0696d7" />
              </svg>
            </button>
            <button aria-label="Help" className="ml-[17px]">
              <svg width="16" height="16" viewBox="0 0 16 16" aria-hidden="true">
                <circle cx="8" cy="8" r="8" fill="#666" />
                <path d="M5.500 6.500Q5.500 4 8 4Q10.500 4 10.500 6.200Q10.500 7.500 8 8.500V10M8 11V13" fill="none" stroke="#e0e0e0" strokeWidth="1.800" />
              </svg>
            </button>
            <button aria-label="Account JL" className="ml-[17px] flex h-[25px] w-[25px] items-center justify-center rounded-full bg-[#efefef] font-[Roboto,sans-serif] text-[11px] text-[#555]">
              JL
            </button>
          </div>
        </header>

        {/* Ribbon */}
        <div className="flex h-[82px] border-b border-[#dcdcdc] bg-[#f1f1f1] font-[Roboto,sans-serif]">
          <div className="w-[126px] shrink-0 pt-2.5 pl-[11px]">
            <button className="flex h-[62px] w-[111px] items-center justify-center gap-1.5 rounded-[4px] border-2 border-[#dfdfdf] pt-px font-bold">
              DESIGN <Caret />
            </button>
          </div>
          <div>
            <nav className="flex h-6 gap-5 pl-3" aria-label="Workspace tabs">
              {tabs.map((t, i) => (
                <button
                  key={t}
                  className={
                    i === 0
                      ? "flex items-center border-b-[3px] border-[#0696d7] px-[13px] pt-0.5 font-bold text-[#0696d7]"
                      : "flex items-center border-b-[3px] border-transparent px-[13px] pt-0.5"
                  }
                >
                  {t}
                </button>
              ))}
            </nav>
            <div className="flex">
              {groups.map((g, i) => (
                <section key={g.label} className={`relative shrink-0 ${g.width}`}>
                  <div className="flex h-[38px] items-center justify-center gap-[11px]">
                    {g.icons.map(([name, icon]) => (
                      <button key={name} aria-label={name}>
                        {icon}
                      </button>
                    ))}
                  </div>
                  <button className="flex h-[19px] w-full items-center justify-center gap-0.5 pt-0.5">
                    {g.label} <Caret />
                  </button>
                  {i < groups.length - 1 && <span className="absolute top-0.5 right-0 h-[51px] w-px bg-[#dadada]" />}
                </section>
              ))}
            </div>
          </div>
        </div>

        {/* Canvas */}
        <main className="relative flex flex-1 flex-col justify-between overflow-hidden pt-1 pb-1 pl-1">
          <Wheel />
          <div className="relative flex items-start justify-between">
            <aside className="w-[300px]">
              <div className="flex h-[25px] items-center border border-[#c8c8c8] bg-[#f1f1f1] pr-px pl-1">
                <button aria-label="Collapse browser" className="mr-2.5">
                  <svg width="10" height="7" viewBox="0 0 10 7" aria-hidden="true">
                    <path d="M5 0V7L0 3.500ZM10 0V7L5 3.500Z" fill="#333" />
                  </svg>
                </button>
                <h2 className="flex-1 font-[Roboto,sans-serif] text-[#555]">BROWSER</h2>
                <button aria-label="Minimize browser" className="mr-[7px]">
                  <svg width="9" height="9" viewBox="0 0 9 9" aria-hidden="true">
                    <circle cx="4.500" cy="4.500" r="4.500" fill="#333" />
                    <path d="M2 4.500H7" stroke="#fff" strokeWidth="1.300" />
                  </svg>
                </button>
                <Grip />
              </div>
              <ul className="mt-[5px] flex flex-col gap-1 pl-4">
                <li className="flex h-5 items-center">
                  <button aria-label="Collapse component" className="mr-2">
                    <svg width="12" height="12" viewBox="0 0 12 12" aria-hidden="true">
                      <path d="M11.500 .5V11.500H.5Z" fill="#777" stroke="#222" />
                    </svg>
                  </button>
                  <div className="flex h-5 items-center bg-[#f1f1f1] pr-2 pl-[3px]">
                    <Eye />
                    <div className="ml-1.5 flex h-4 items-center bg-[#999] pr-4 pl-[3px] font-bold text-white">
                      <svg width="16" height="16" viewBox="0 0 16 16" className="mr-3.5" aria-hidden="true">
                        <path d="M.5 4.500L4 .5H15.500V11L11.500 15.500H.5Z" fill="#dadfe8" stroke="#333" strokeLinejoin="round" />
                        <path d="M1 4.500L4 1H15L11.500 4.500Z" fill="#fff" />
                        <path d="M1 4.500H11.500V15H1Z" fill="#eef1f6" />
                      </svg>
                      front co2 wheel 2 v1
                    </div>
                    <input
                      type="radio"
                      name="active"
                      aria-label="Active component"
                      defaultChecked
                      className="ml-1 h-[13px] w-[13px] appearance-none rounded-full border border-[#333] bg-[radial-gradient(circle,#333_2px,white_3px)]"
                    />
                  </div>
                </li>
                <li>
                  <ul className="flex flex-col gap-1 pl-5">
                    <TreeItem label="Document Settings" icons={<Gear />} />
                    <TreeItem label="Named Views" icons={<Folder />} />
                    <TreeItem label="Origin" icons={<><EyeOff /><Folder /></>} />
                    <TreeItem label="Bodies" icons={<><Eye /><Folder /></>} />
                    <TreeItem label="Sketches" icons={<><Eye /><Folder /></>} />
                  </ul>
                </li>
              </ul>
            </aside>
            <div className="-mt-1">
              <ViewCube />
            </div>
          </div>

          <div className="relative grid grid-cols-[1fr_auto_1fr] items-end pr-2">
            <div className="flex h-[25px] w-[300px] items-center border border-t-0 border-[#c8c8c8] bg-[#f1f1f1] pr-px pl-6">
              <h2 className="flex-1 pt-px font-[Roboto,sans-serif] text-[#555]">COMMENTS</h2>
              <button aria-label="Add comment" className="mr-[7px]">
                <svg width="9" height="9" viewBox="0 0 9 9" aria-hidden="true">
                  <circle cx="4.500" cy="4.500" r="4.500" fill="#333" />
                  <path d="M2 4.500H7M4.500 2V7" stroke="#fff" strokeWidth="1.200" />
                </svg>
              </button>
              <Grip />
            </div>
            <NavBar />
            <span />
          </div>
        </main>

        {/* Timeline */}
        <footer className="flex h-[50px] items-start justify-between border-t-2 border-[#c8c8c8] bg-[#f1f1f1] pr-[13px] pl-2.5">
          <div className="flex">
            <div className="flex h-12 w-[136px] items-center">
              {playback.map(([label, d]) => (
                <button key={label} aria-label={label} className="w-[25px]">
                  <svg width="14" height="16" viewBox="0 0 14 16" fill="#444" aria-hidden="true">
                    <path d={d} />
                  </svg>
                </button>
              ))}
            </div>
            <ol className="-ml-1 flex pt-[15px]">
              {features.map((k, i) => (
                <li key={i} className="flex w-6 flex-col items-center">
                  <button aria-label={`Feature ${i + 1}`} className="h-4">
                    <Feature kind={k} />
                  </button>
                  <span className="mt-[3px] h-[5px] w-0.5 bg-[#c8c8c8]" />
                  <span
                    className={
                      i === 0
                        ? "h-0.5 w-[13px] self-end bg-[#c8c8c8]"
                        : i === features.length - 1
                          ? "h-0.5 w-[13px] self-start bg-[#c8c8c8]"
                          : "h-0.5 w-full bg-[#c8c8c8]"
                    }
                  />
                </li>
              ))}
            </ol>
            <svg width="12" height="32" viewBox="0 0 12 32" className="mt-[9px] -ml-1.5" aria-hidden="true">
              <path d="M0 0H12V4L7 9V32H5V9L0 4Z" fill="#666" />
            </svg>
          </div>
          <button aria-label="Timeline settings" className="flex h-12 items-center">
            <Gear />
          </button>
        </footer>
      </div>
      <div className="h-0.5 bg-[#171b2c]" />
    </div>
  );
}
